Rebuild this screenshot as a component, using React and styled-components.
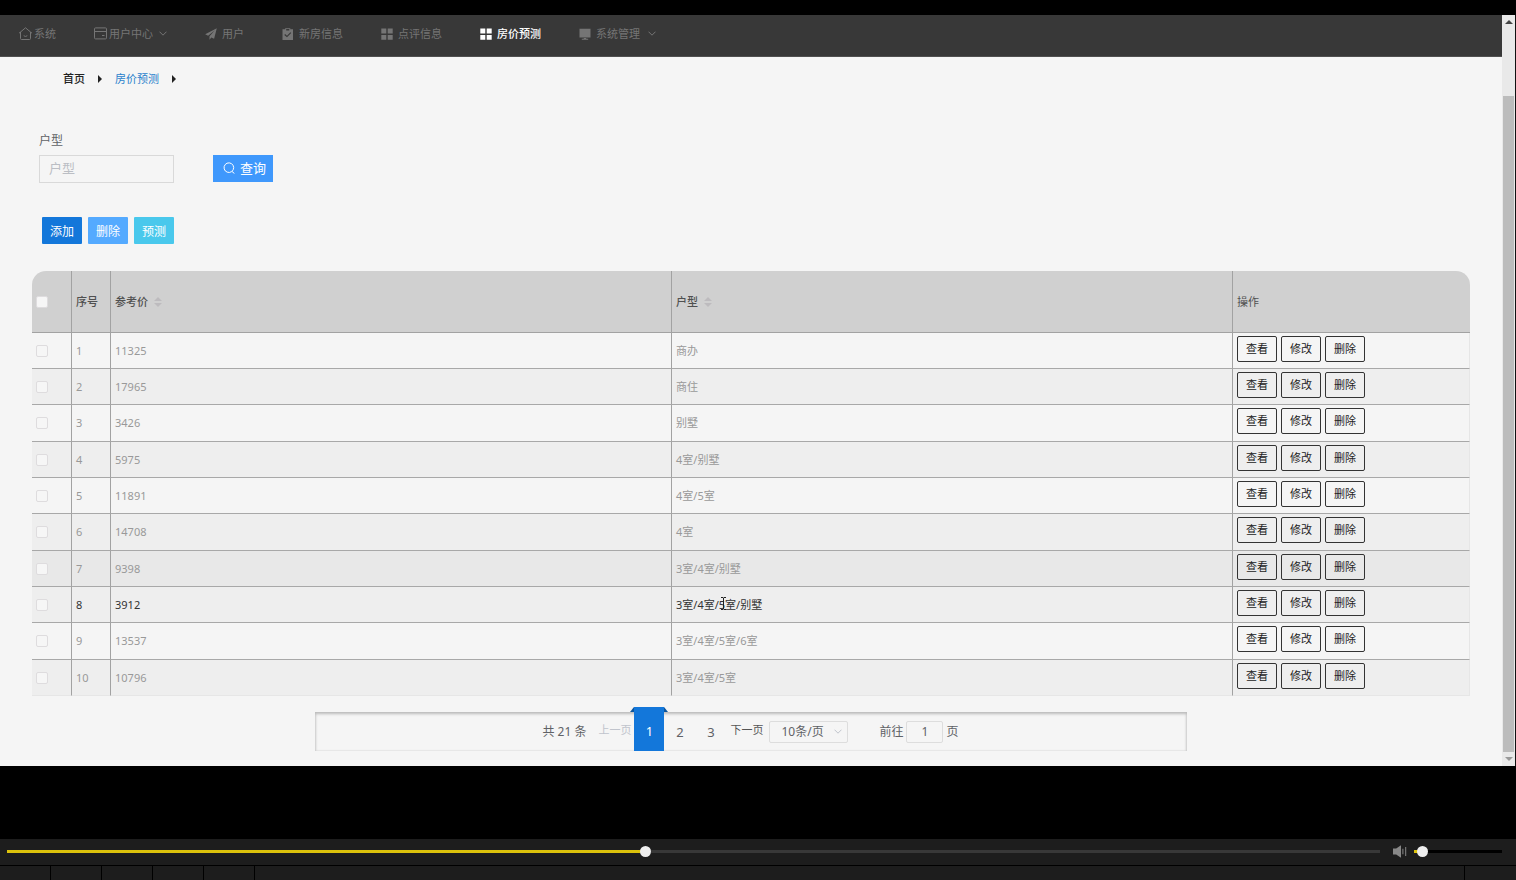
import React, { useState } from 'react';
import styled, { createGlobalStyle, css } from 'styled-components';

const GlobalStyle = createGlobalStyle`
  * {
    box-sizing: border-box;
  }

  body {
    margin: 0;
    background: #000;
    font-family: "Noto Sans", "Noto Sans CJK SC", sans-serif;
    font-size: 11px;
    line-height: 16px;
    color: #333;
  }

  button, input, select {
    font-family: inherit;
    margin: 0;
  }
`

const Player = styled.div`
  min-height: 100vh;
  padding-top: 15px;
  display: flex;
  flex-direction: column;
`

const Screen = styled.div`
  display: flex;
  border-right: 1px solid #111;
`

const Page = styled.div`
  flex: 1;
  min-width: 0;
  background: #f5f5f5;
`

const Nav = styled.nav`
  display: flex;
  align-items: center;
  gap: 38px;
  height: 42px;
  padding: 0 19px 4px;
  background: #383838;
  border-bottom: 1px solid #505050;
`

const NavLink = styled.a`
  display: flex;
  align-items: center;
  gap: ${props => props.$tight ? 2 : 5}px;
  color: ${props => props.$active ? '#fff' : '#757575'};
  font-weight: ${props => props.$active ? 500 : 400};
  text-decoration: none;
  white-space: nowrap;
`

const Glyph = styled.svg`
  display: block;
  flex: none;
  width: ${props => props.$size || 12}px;
  height: ${props => props.$size || 12}px;
  margin-left: ${props => props.$space || 0}px;
  fill: ${props => props.$line ? 'none' : 'currentColor'};
  stroke: ${props => props.$line ? 'currentColor' : 'none'};
`

const Crumbs = styled.div`
  display: flex;
  align-items: center;
  gap: 12px;
  padding: 14px 63px 0;
`

const Crumb = styled.a`
  color: ${props => props.$current ? '#2a82cc' : '#222'};
  font-weight: ${props => props.$current ? 400 : 500};
  text-decoration: none;
`

const CrumbArrow = styled.i`
  border: 4px solid transparent;
  border-left: 4px solid #222;
  border-right: 0;
  margin: 0 1px;
`

const SearchForm = styled.form`
  display: flex;
  align-items: flex-end;
  gap: 39px;
  padding: 46px 39px 0;
`

const Field = styled.label`
  display: flex;
  flex-direction: column;
  gap: 6px;
  font-size: 12px;
  color: #606266;
`

const TextInput = styled.input`
  width: 135px;
  height: 28px;
  padding: 0 9px 2px;
  border: 1px solid #d9d9d9;
  background: transparent;
  font-size: 13px;
  color: #606266;
  outline: none;

  &::placeholder {
    color: #bbbec4;
  }
`

const SearchButton = styled.button`
  display: flex;
  align-items: center;
  gap: 5px;
  width: 60px;
  height: 27px;
  margin-bottom: 1px;
  padding: 0 0 2px 10px;
  border: 0;
  background: #3f98fc;
  color: #fff;
  font-size: 13px;
`

const Actions = styled.div`
  display: flex;
  gap: 6px;
  padding: 34px 42px 27px;
`

const ActionButton = styled.button`
  width: 40px;
  height: 27px;
  padding: 0;
  border: 0;
  border-radius: 1px;
  background: ${props => props.$color};
  color: #fff;
  font-size: 12px;
`

const TableWrap = styled.div`
  margin: 0 32px;
  border-radius: 14px 14px 0 0;
  overflow: hidden;
`

const Table = styled.table`
  width: 100%;
  table-layout: fixed;
  border-collapse: separate;
  border-spacing: 0;
`

const Col = styled.col`
  width: ${props => props.$width ? `${props.$width}px` : 'auto'};
`

const Th = styled.th`
  height: 62px;
  padding: 0 4px;
  text-align: left;
  font-weight: ${props => props.$light ? 400 : 500};
  color: #505050;
  background: #d0d0d0;
  border-bottom: 1px solid #a2a2a2;

  &:not(:last-child) {
    border-right: 1px solid #a2a2a2;
  }
`

const Td = styled.td`
  padding: 0 4px;
  border-bottom: 1px solid #a8a8a8;

  &:not(:last-child) {
    border-right: 1px solid #a2a2a2;
  }

  &:last-child {
    border-right: 1px solid #e6e6e6;
  }
`

const Row = styled.tr`
  height: 36px;
  background: #f5f5f5;
  color: ${props => props.$current ? '#333' : '#999'};

  &:nth-child(even) {
    background: #eee;
  }

  &:nth-child(3n) {
    height: 37px;
  }

  &:last-child ${Td} {
    border-bottom-color: #e6e6e6;
  }

  ${props => props.$hover && css`
    background: #e8e8e8;
  `}
`

const Check = styled.input`
  appearance: none;
  display: block;
  width: 12px;
  height: 12px;
  border: 1px solid #dedcde;
  border-radius: 2px;
  background: #f6f6f6;
`

const HeadLabel = styled.span`
  display: flex;
  align-items: center;
  gap: 6px;
`

const Sorter = styled.span`
  display: flex;
  flex-direction: column;
  gap: 2px;

  &::before, &::after {
    content: "";
    border: 4px solid transparent;
  }

  &::before {
    border-top: 0;
    border-bottom-color: #bdbbbe;
  }

  &::after {
    border-bottom: 0;
    border-top-color: #bdbbbe;
  }
`

const RowActions = styled.div`
  display: flex;
  gap: 4px;
  padding-bottom: 4px;
`

const RowButton = styled.button`
  width: 40px;
  height: 26px;
  padding: 0 0 2px;
  border: 1px solid #333;
  border-radius: 2px;
  background: transparent;
  color: #222;
  font-size: 11px;
`

const WithCaret = styled.span`
  position: relative;
`

const Caret = styled.svg`
  position: absolute;
  left: 44px;
  top: 0;
  width: 7px;
  height: 13px;
  fill: none;
  stroke: #222;
`

const Pagination = styled.div`
  display: flex;
  align-items: center;
  justify-content: center;
  width: 58%;
  height: 39px;
  margin: 16px auto 15px;
  padding-right: 1px;
  box-shadow: inset 0 2px 3px #bbb, inset 1px 0 2px #ddd, inset -1px 0 2px #ddd;
  font-size: 12px;
  color: #606266;
  white-space: nowrap;
`

const StepButton = styled.button`
  padding: 0 0 3px;
  margin: ${props => props.$next ? '0 6px 0 4px' : '0 3px 0 12px'};
  border: 0;
  background: none;
  font-size: 11px;
  line-height: 16px;
  color: #555;

  &:disabled {
    color: #c0c4cc;
  }
`

const PageButton = styled.button`
  width: 31px;
  height: 28px;
  padding: 0;
  border: 0;
  background: none;
  color: #606266;
  font-size: 13px;

  ${props => props.$active && css`
    position: relative;
    align-self: flex-end;
    width: 30px;
    height: 44px;
    padding-top: 4px;
    background: #1377da;
    color: #fff;

    &::before, &::after {
      content: "";
      position: absolute;
      top: 0;
      border-bottom: 5px solid #0b559e;
    }

    &::before {
      right: 100%;
      border-left: 4px solid transparent;
    }

    &::after {
      left: 100%;
      border-right: 4px solid transparent;
    }
  `}
`

const SizeBox = styled.span`
  display: grid;
  align-items: center;
  width: 79px;
  margin-right: 31px;

  > * {
    grid-area: 1 / 1;
  }

  svg {
    justify-self: end;
    margin-right: 6px;
    color: #c0c4cc;
    pointer-events: none;
  }
`

const SizeSelect = styled.select`
  appearance: none;
  width: 100%;
  height: 22px;
  padding: 0 11px;
  border: 1px solid #ddd;
  border-radius: 2px;
  background: transparent;
  color: #606266;
  font-size: 12px;
`

const Jump = styled.label`
  display: flex;
  align-items: center;
  gap: 3px;
`

const JumpInput = styled.input`
  width: 37px;
  height: 22px;
  padding: 0;
  border: 1px solid #ddd;
  border-radius: 2px;
  background: transparent;
  color: #606266;
  font-size: 12px;
  text-align: center;
`

const Scrollbar = styled.div`
  display: flex;
  flex-direction: column;
  width: 13px;
  background: #e9e9e9;
`

const ScrollArrow = styled.i`
  align-self: center;
  width: 8px;
  margin: ${props => props.$down ? '5px 0' : '5px 0 6px'};
  border: 4px solid transparent;
  ${props => props.$down
    ? css`border-bottom: 0; border-top-color: #999;`
    : css`border-top: 0; border-bottom-color: #444;`}
`

const ScrollTrack = styled.div`
  display: flex;
  flex: 1;
  flex-direction: column;
  padding: 0 1px;

  &::before {
    content: "";
    flex: 1;
  }

  &::after {
    content: "";
    flex: 10;
    background: #bcbcbc;
  }
`

const Controls = styled.div`
  margin-top: auto;
  background: #1d1d1d;
`

const Sliders = styled.div`
  display: flex;
  align-items: center;
  height: 26px;
  padding: 0 14px 1px 7px;
  color: #888;
`

const Slider = styled.input`
  appearance: none;
  display: block;
  height: 11px;
  min-width: 0;
  background: none;
  outline: none;
  ${props => props.$volume
    ? css`width: 88px; margin-left: 7px;`
    : css`flex: 1; margin-right: 12px;`}

  &::-webkit-slider-runnable-track {
    height: 3px;
    background: linear-gradient(
      to right,
      #dcc20c ${props => props.value / 10}%,
      ${props => props.$volume ? '#000' : '#383838'} ${props => props.value / 10}%
    );
  }

  &::-webkit-slider-thumb {
    appearance: none;
    width: 11px;
    height: 11px;
    margin-top: -4px;
    border-radius: 50%;
    background: #eee;
  }
`

const ToolStrip = styled.div`
  display: flex;
  height: 15px;
  border-top: 1px solid #000;
`

const ToolCell = styled.div`
  width: 51px;
  border-right: 1px solid #000;

  &:last-child {
    width: 52px;
    margin-left: auto;
    border-left: 1px solid #000;
    border-right: 0;
  }
`

const Chevron = ({ space }) => (
  <Glyph $size={8} $space={space} $line viewBox="0 0 8 8">
    <path d="M.5 1.7 4 5.2l3.5-3.5" />
  </Glyph>
)

const HomeIcon = () => (
  <Glyph $size={13} $line viewBox="0 0 13 13">
    <path d="M1.5 5v6.5q0 1 1 1h8q1 0 1-1V5L6.5.8zM0 6.2 1.5 5M13 6.2 11.5 5M4.7 8.7q1.8 1.5 3.6 0" />
  </Glyph>
)

const CardIcon = () => (
  <Glyph $size={13} $line viewBox="0 0 13 13">
    <path d="M1.5.9h10q1 0 1 1v9q0 1-1 1h-10q-1 0-1-1v-9q0-1 1-1zM.5 4.5h12M8 8.5h2.5" />
  </Glyph>
)

const PlaneIcon = () => (
  <Glyph viewBox="0 0 12 12">
    <path d="M11.8.3.2 6.2l2.9 1.5L9.7 2.6 4.5 8.3v3.4l1.8-2.2 2.8 1.3z" />
  </Glyph>
)

const ClipIcon = () => (
  <Glyph viewBox="0 0 12 12">
    <path fillRule="evenodd" d="M.5 1.2h2.7V.2h5.1v1H11V12H.5zM4.2 1.1v1.3h3.1V1.1zM3.1 6.1l-.8.8L5 9.3l4.2-4.2-.8-.8L5 7.7z" />
  </Glyph>
)

const GridIcon = () => (
  <Glyph viewBox="0 0 12 12">
    <path d="M.3.6h5v5h-5zM6.7.6h5v5h-5zM.3 6.9h5v4.8h-5zM6.7 6.9h5v4.8h-5z" />
  </Glyph>
)

const MonitorIcon = () => (
  <Glyph viewBox="0 0 12 12">
    <path d="M.5.8h11v8.6H.5zM4.8 10h2.4v.8h2v.9H2.8v-.9h2z" />
  </Glyph>
)

const SearchIcon = () => (
  <Glyph $line viewBox="0 0 12 12">
    <path d="M8.6 9.6a4.8 4.8 0 1 1 1.6-1.9M8.6 9.6q1-.7 1.6-1.9M8.8 9.3l2.6 2.2" />
  </Glyph>
)

const SpeakerIcon = () => (
  <Glyph $size={15} viewBox="0 0 15 15">
    <path d="M1 4.5h3.2L9 1.3v12.4l-4.8-3.2H1zM10.4 4.8h1v5.4h-1zM13.2 3h1v9h-1z" />
  </Glyph>
)

const menus = [
  { text: '系统', icon: <HomeIcon />, tight: true },
  { text: '用户中心', icon: <CardIcon />, tight: true, more: true },
  { text: '用户', icon: <PlaneIcon /> },
  { text: '新房信息', icon: <ClipIcon /> },
  { text: '点评信息', icon: <GridIcon /> },
  { text: '房价预测', icon: <GridIcon />, active: true },
  { text: '系统管理', icon: <MonitorIcon />, more: true },
]

const rows = [
  ['11325', '商办'],
  ['17965', '商住'],
  ['3426', '别墅'],
  ['5975', '4室/别墅'],
  ['11891', '4室/5室'],
  ['14708', '4室'],
  ['9398', '3室/4室/别墅'],
  ['3912', '3室/4室/5室/别墅'],
  ['13537', '3室/4室/5室/6室'],
  ['10796', '3室/4室/5室'],
]

const HouseTable = () => (
  <TableWrap>
    <Table>
      <colgroup>
        <Col $width={40} />
        <Col $width={39} />
        <Col />
        <Col />
        <Col $width={237} />
      </colgroup>
      <thead>
        <tr>
          <Th><Check type="checkbox" aria-label="全选" /></Th>
          <Th>序号</Th>
          <Th><HeadLabel>参考价<Sorter /></HeadLabel></Th>
          <Th><HeadLabel>户型<Sorter /></HeadLabel></Th>
          <Th $light>操作</Th>
        </tr>
      </thead>
      <tbody>
        {rows.map(([price, type], i) => (
          <Row key={price} $hover={i === 6} $current={i === 7}>
            <Td><Check type="checkbox" aria-label={`选择 ${i + 1}`} /></Td>
            <Td>{i + 1}</Td>
            <Td>{price}</Td>
            <Td>
              {i === 7
                ? <WithCaret>{type}<Caret viewBox="0 0 7 13"><path d="M1 .5h2l.5.5.5-.5h2M3.5 1v11M1 12.5h2l.5-.5.5.5h2" /></Caret></WithCaret>
                : type}
            </Td>
            <Td>
              <RowActions>
                <RowButton type="button">查看</RowButton>
                <RowButton type="button">修改</RowButton>
                <RowButton type="button">删除</RowButton>
              </RowActions>
            </Td>
          </Row>
        ))}
      </tbody>
    </Table>
  </TableWrap>
)

const Pager = () => (
  <Pagination>
    <span>共 21 条</span>
    <StepButton type="button" disabled>上一页</StepButton>
    <PageButton type="button" $active>1</PageButton>
    <PageButton type="button">2</PageButton>
    <PageButton type="button">3</PageButton>
    <StepButton type="button" $next>下一页</StepButton>
    <SizeBox>
      <SizeSelect aria-label="每页条数">
        <option>10条/页</option>
      </SizeSelect>
      <Chevron />
    </SizeBox>
    <Jump>前往<JumpInput defaultValue="1" />页</Jump>
  </Pagination>
)

export default function App() {
  const [position, setPosition] = useState(465)
  const [volume, setVolume] = useState(45)

  return (
    <Player>
      <GlobalStyle />
      <Screen>
        <Page>
          <Nav>
            {menus.map(({ text, icon, tight, active, more }) => (
              <NavLink key={text} href="#" $tight={tight} $active={active}>
                {icon}
                {text}
                {more && <Chevron space={tight ? 4 : 3} />}
              </NavLink>
            ))}
          </Nav>
          <Crumbs>
            <Crumb href="#">首页</Crumb>
            <CrumbArrow />
            <Crumb href="#" $current>房价预测</Crumb>
            <CrumbArrow />
          </Crumbs>
          <SearchForm>
            <Field>
              户型
              <TextInput placeholder="户型" />
            </Field>
            <SearchButton type="button"><SearchIcon />查询</SearchButton>
          </SearchForm>
          <Actions>
            <ActionButton type="button" $color="#1377da">添加</ActionButton>
            <ActionButton type="button" $color="#54aaff">删除</ActionButton>
            <ActionButton type="button" $color="#49c8ec">预测</ActionButton>
          </Actions>
          <HouseTable />
          <Pager />
        </Page>
        <Scrollbar>
          <ScrollArrow />
          <ScrollTrack />
          <ScrollArrow $down />
        </Scrollbar>
      </Screen>
      <Controls>
        <Sliders>
          <Slider
            type="range" min="0" max="1000" aria-label="播放进度"
            value={position} onChange={e => setPosition(e.target.value)}
          />
          <SpeakerIcon />
          <Slider
            type="range" min="0" max="1000" aria-label="音量" $volume
            value={volume} onChange={e => setVolume(e.target.value)}
          />
        </Sliders>
        <ToolStrip>
          <ToolCell />
          <ToolCell />
          <ToolCell />
          <ToolCell />
          <ToolCell />
          <ToolCell />
        </ToolStrip>
      </Controls>
    </Player>
  )
}
